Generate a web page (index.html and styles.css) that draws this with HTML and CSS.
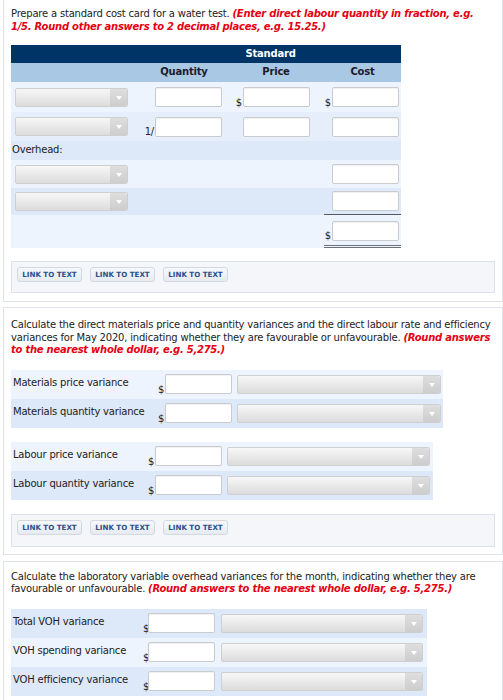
FILE: index.html
```html
<!DOCTYPE html>
<html>
<head>
<meta charset="utf-8">
<link rel="stylesheet" href="styles.css">
</head>
<body>
<div class="card card-first">
  <p class="q">Prepare a standard cost card for a water test. <span class="hint">(Enter direct labour quantity in fraction, e.g. 1/5. Round other answers to 2 decimal places, e.g. 15.25.)</span></p>
  <div class="cost-table">
    <div class="crow h1"><div></div><div class="span3">Standard</div></div>
    <div class="crow h2"><div></div><div class="c">Quantity</div><div class="c">Price</div><div class="c">Cost</div></div>
    <div class="crow r1 light">
      <div class="c1"><span class="sel"><span class="arr"></span></span></div>
      <div class="c2"><span class="inp"></span></div>
      <div class="c3"><span class="cur">$</span><span class="inp"></span></div>
      <div class="c4"><span class="cur">$</span><span class="inp"></span></div>
    </div>
    <div class="crow r2 mid">
      <div class="c1"><span class="sel"><span class="arr"></span></span></div>
      <div class="c2"><span class="cur">1/</span><span class="inp"></span></div>
      <div class="c3"><span class="inp"></span></div>
      <div class="c4"><span class="inp"></span></div>
    </div>
    <div class="crow r3 dark">
      <div class="c1 lbl">Overhead:</div><div></div><div></div><div></div>
    </div>
    <div class="crow r4 light">
      <div class="c1"><span class="sel"><span class="arr"></span></span></div>
      <div></div><div></div>
      <div class="c4"><span class="inp"></span></div>
    </div>
    <div class="crow r5 dark">
      <div class="c1"><span class="sel"><span class="arr"></span></span></div>
      <div></div><div></div>
      <div class="c4 single"><span class="inp"></span></div>
    </div>
    <div class="crow r6 light">
      <div></div><div></div><div></div>
      <div class="c4 double"><span class="cur">$</span><span class="inp"></span></div>
    </div>
  </div>
  <div class="links">
    <span class="btn">LINK TO TEXT</span><span class="btn">LINK TO TEXT</span><span class="btn">LINK TO TEXT</span>
  </div>
</div>

<div class="card card-second">
  <p class="q">Calculate the direct materials price and quantity variances and the direct labour rate and efficiency variances for May 2020, indicating whether they are favourable or unfavourable. <span class="hint">(Round answers to the nearest whole dollar, e.g. 5,275.)</span></p>
  <div class="vblock mat">
    <div class="vrow light"><span class="vlbl">Materials price variance</span><span class="cur">$</span><span class="inp"></span><span class="sel wide"><span class="arr"></span></span></div>
    <div class="vrow dark"><span class="vlbl">Materials quantity variance</span><span class="cur">$</span><span class="inp"></span><span class="sel wide"><span class="arr"></span></span></div>
  </div>
  <div class="vblock lab">
    <div class="vrow light"><span class="vlbl">Labour price variance</span><span class="cur">$</span><span class="inp"></span><span class="sel wide"><span class="arr"></span></span></div>
    <div class="vrow dark"><span class="vlbl">Labour quantity variance</span><span class="cur">$</span><span class="inp"></span><span class="sel wide"><span class="arr"></span></span></div>
  </div>
  <div class="links links-2">
    <span class="btn">LINK TO TEXT</span><span class="btn">LINK TO TEXT</span><span class="btn">LINK TO TEXT</span>
  </div>
</div>

<div class="card card-third">
  <p class="q">Calculate the laboratory variable overhead variances for the month, indicating whether they are favourable or unfavourable. <span class="hint">(Round answers to the nearest whole dollar, e.g. 5,275.)</span></p>
  <div class="vblock voh">
    <div class="vrow dark"><span class="vlbl">Total VOH variance</span><span class="cur">$</span><span class="inp"></span><span class="sel wide"><span class="arr"></span></span></div>
    <div class="vrow light"><span class="vlbl">VOH spending variance</span><span class="cur">$</span><span class="inp"></span><span class="sel wide"><span class="arr"></span></span></div>
    <div class="vrow dark"><span class="vlbl">VOH efficiency variance</span><span class="cur">$</span><span class="inp"></span><span class="sel wide"><span class="arr"></span></span></div>
  </div>
</div>
</body>
</html>
```

FILE: styles.css
```css
html, body {
  margin: 0;
  padding: 0;
  background: #ffffff;
}
body {
  font-family: "DejaVu Sans", Verdana, sans-serif;
  font-size: 10px;
  line-height: 12.5px;
  letter-spacing: -0.2px;
  color: #222222;
  width: 503px;
  height: 700px;
  overflow: hidden;
}
.card {
  margin-left: 3px;
  width: 484px;
  border: 1px solid #dfe3ea;
  padding: 10px 7px 8px 7px;
  background: #ffffff;
}
.card-first {
  margin-top: -2px;
  padding-top: 9px;
}
.card-second {
  margin-top: 5px;
  padding-top: 11px;
  padding-bottom: 7px;
}
.card-third {
  margin-top: 6px;
  padding-top: 9px;
  padding-bottom: 10px;
}
.q {
  margin: 0;
}
.hint {
  color: #e60012;
  font-weight: bold;
  font-style: italic;
  letter-spacing: -0.25px;
}

/* cost table */
.cost-table {
  margin-top: 12px;
  width: 390px;
}
.crow {
  display: grid;
  grid-template-columns: 129px 88px 96px 77px;
  align-items: stretch;
}
.crow > div {
  display: flex;
  align-items: center;
}
.h1 {
  height: 18px;
  background: #003466;
  color: #ffffff;
  font-weight: bold;
}
.h1 .span3 {
  grid-column: 2 / span 3;
  justify-content: center;
}
.h2 {
  height: 19px;
  background: #a9c8e4;
  color: #1b1b2b;
  font-weight: bold;
}
.h2 .c {
  justify-content: center;
}
.light { background: #eef4fe; }
.mid { background: #e6eefb; }
.dark { background: #dde8f8; }
.r1 { height: 30px; }
.r2 { height: 29px; }
.r3 { height: 19px; }
.r4 { height: 28px; }
.r5 { height: 27px; }
.r6 { height: 33px; }
.c1 { padding-left: 4px; }
.c1.lbl { padding-left: 1px; }
.c2 { justify-content: flex-end; padding-right: 6px; }
.c3 { justify-content: flex-end; padding-right: 14px; }
.c4 { justify-content: flex-end; padding-right: 2px; }
.c2 .cur, .c3 .cur, .c4 .cur {
  align-self: center;
  margin-top: 11px;
  margin-right: 1px;
}
.c4.single {
  border-bottom: 1px solid #555a60;
}
.c4.double {
  border-bottom: 3px double #6d7177;
  padding-top: 1px;
}

.inp {
  display: inline-block;
  box-sizing: border-box;
  width: 67px;
  height: 20px;
  background: #ffffff;
  border: 1px solid #c9cbcf;
  border-radius: 2px;
  box-shadow: inset 0 1px 1px rgba(0,0,0,0.06);
}
.cur {
  font-size: 10px;
  line-height: 10px;
}

.sel {
  position: relative;
  display: inline-block;
  box-sizing: border-box;
  width: 113px;
  height: 19px;
  border: 1px solid #cfcfd2;
  border-radius: 2px;
  background: linear-gradient(#f7f7f7, #dcdcdc);
}
.arr {
  position: absolute;
  right: 0;
  top: 0;
  bottom: 0;
  width: 17px;
  background: linear-gradient(#dedede, #cdcdcd);
  border-radius: 0 2px 2px 0;
}
.arr::after {
  content: "";
  position: absolute;
  left: 6px;
  top: 7px;
  border-left: 3px solid transparent;
  border-right: 3px solid transparent;
  border-top: 4px solid #ffffff;
}

/* links */
.links {
  margin-top: 13px;
  height: 15px;
  padding: 5px 5px 10px 5px;
  border: 1px solid #dde2ea;
  background: #f4f6f9;
  display: flex;
  gap: 8px;
}
.links-2 {
  margin-top: 14px;
  padding-bottom: 11px;
}
.btn {
  box-sizing: border-box;
  width: 65px;
  height: 15px;
  border: 1px solid #d3d9e2;
  border-radius: 3px;
  background: linear-gradient(#f6f8fb, #e6ebf2);
  color: #2c4f8b;
  font-weight: bold;
  font-size: 7.1px;
  letter-spacing: 0;
  line-height: 13px;
  text-align: center;
  white-space: nowrap;
}

/* variance blocks */
.vblock {
  margin-top: 13px;
}
.vblock.lab {
  margin-top: 14px;
}
.vrow {
  display: flex;
  align-items: center;
  height: 29px;
}
.vlbl {
  padding-left: 2px;
  box-sizing: border-box;
  align-self: center;
  margin-top: -2px;
}
.vrow .cur {
  align-self: center;
  margin-top: 12px;
  width: 7px;
}
.vrow .sel.wide {
  margin-left: 5px;
  width: 204px;
  height: 19px;
}
.mat { width: 432px; }
.mat .vlbl { width: 147px; }
.lab { width: 422px; }
.lab .vlbl { width: 137px; }
.lab .sel.wide { width: 203px; }
.voh { width: 416px; }
.voh .vlbl { width: 132px; }
.voh .cur { width: 5px; }
.voh .sel.wide { margin-left: 6px; width: 202px; }
```
